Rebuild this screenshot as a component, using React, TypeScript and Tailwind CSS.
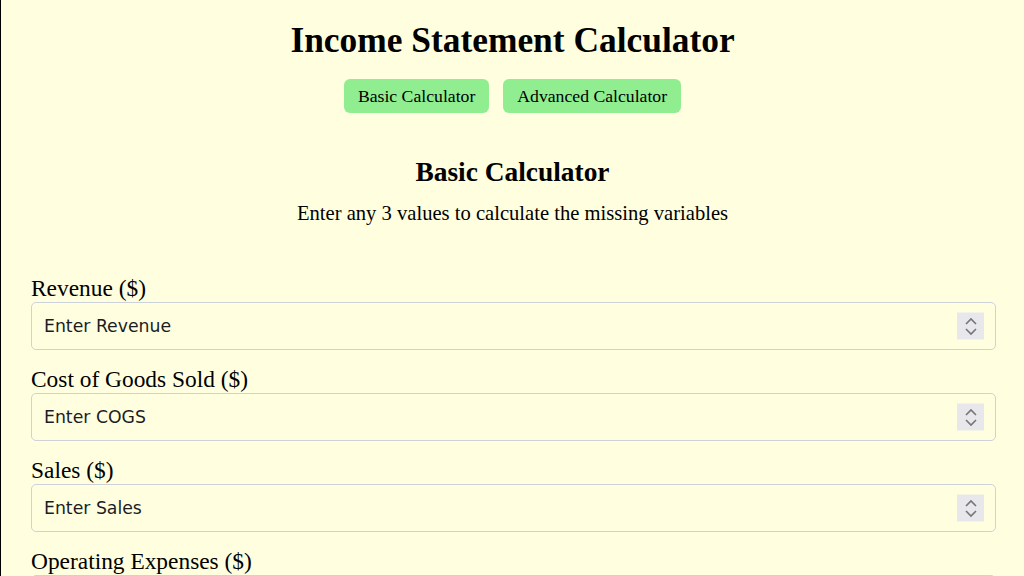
import React from "react";

const fields = [
  { label: "Revenue ($)", placeholder: "Enter Revenue" },
  { label: "Cost of Goods Sold ($)", placeholder: "Enter COGS" },
  { label: "Sales ($)", placeholder: "Enter Sales" },
  { label: "Operating Expenses ($)", placeholder: "Enter Operating Expenses" },
];

function Spinner() {
  return (
    <div className="pointer-events-none absolute right-[12px] top-1/2 flex h-[27px] w-[27px] -translate-y-1/2 items-center justify-center bg-[#e7e7ec]">
      <svg width="14" height="22" viewBox="0 0 14 22" fill="none">
        <path d="M2 8.5 L7 3.5 L12 8.5" stroke="#767676" strokeWidth="1.6" />
        <path d="M2 13.5 L7 18.5 L12 13.5" stroke="#767676" strokeWidth="1.6" />
      </svg>
    </div>
  );
}

export default function App() {
  return (
    <div
      className="min-h-screen border-l border-black bg-[#ffffe0] text-black"
      style={{ fontFamily: '"Liberation Serif", "Times New Roman", serif' }}
    >
      <h1 className="pt-[22px] text-center text-[35.4px] font-bold leading-[37px]">
        Income Statement Calculator
      </h1>

      <div className="mt-[20px] flex justify-center gap-[14px]">
        <button className="h-[34px] rounded-[6px] bg-[#90ee90] px-[14px] text-[17.7px]">
          Basic Calculator
        </button>
        <button className="h-[34px] rounded-[6px] bg-[#90ee90] px-[14px] text-[17.7px]">
          Advanced Calculator
        </button>
      </div>

      <h2 className="mt-[45px] text-center text-[27.4px] font-bold leading-[28px]">
        Basic Calculator
      </h2>
      <p className="mt-[17px] text-center text-[20.6px] leading-[21px]">
        Enter any 3 values to calculate the missing variables
      </p>

      <div className="ml-[30px] mr-[28px] mt-[53px] flex flex-col gap-[18px]">
        {fields.map((f) => (
          <div key={f.label} className="flex flex-col gap-[2px]">
            <label className="text-[23.4px] leading-[23px]">{f.label}</label>
            <div className="relative">
              <input
                type="text"
                placeholder={f.placeholder}
                className="h-[48px] w-full rounded-[5px] border border-[#cdd2da] bg-transparent pl-[12px] text-[17.3px] outline-none placeholder:text-[#1c1c24]"
                style={{ fontFamily: '"DejaVu Sans", Verdana, sans-serif' }}
              />
              <Spinner />
            </div>
          </div>
        ))}
      </div>
    </div>
  );
}
